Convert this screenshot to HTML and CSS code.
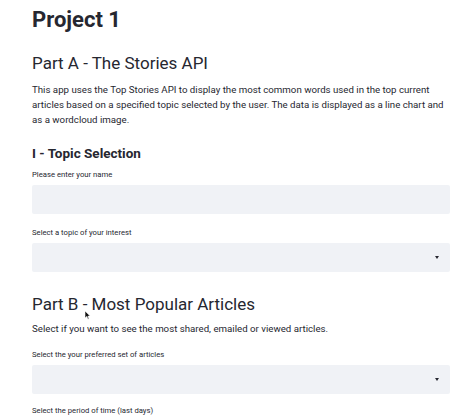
FILE: index.html
```html
<!DOCTYPE html>
<html lang="en">
<head>
<meta charset="utf-8">
<title>Project 1</title>
<link rel="stylesheet" href="styles.css">
</head>
<body>
<main class="app">
  <h1 class="title">Project 1</h1>
  <h2 class="heading heading-a">Part A - The Stories API</h2>
  <p class="text">This app uses the Top Stories API to display the most common words used in the top current articles based on a specified topic selected by the user. The data is displayed as a line chart and as a wordcloud image.</p>
  <h3 class="section">I - Topic Selection</h3>
  <div class="field field-first">
    <label class="label">Please enter your name</label>
    <div class="box"></div>
  </div>
  <div class="field">
    <label class="label">Select a topic of your interest</label>
    <div class="box select"><span class="caret"></span></div>
  </div>
  <h2 class="heading heading-b">Part B - Most Popular Articles</h2>
  <p class="text text-b">Select if you want to see the most shared, emailed or viewed articles.</p>
  <div class="field">
    <label class="label">Select the your preferred set of articles</label>
    <div class="box select"><span class="caret"></span></div>
  </div>
  <div class="field field-last">
    <label class="label">Select the period of time (last days)</label>
  </div>
  <svg class="cursor" width="6" height="9" viewBox="0 0 6 9"><path d="M0 0 L0 7 L1.8 5.4 L3 8.2 L4 7.8 L2.9 5.1 L5.2 5.1 Z" fill="#111" stroke="#fff" stroke-width="0.6"/></svg>
</main>
</body>
</html>
```
FILE: styles.css
```css
html, body {
  margin: 0;
  padding: 0;
  background: #ffffff;
}
body {
  font-family: Roboto, "Noto Sans", sans-serif;
  color: #262730;
}
.app {
  position: relative;
  width: 418px;
  padding: 6px 0 0 32px;
}
.title {
  margin: 0;
  font-size: 22px;
  font-weight: 700;
  line-height: 28px;
}
.heading {
  margin: 0;
  font-size: 17px;
  font-weight: 400;
  line-height: 22px;
}
.heading-a {
  margin-top: 18px;
}
.heading-b {
  margin-top: 21px;
}
.text {
  margin: 8px 0 0;
  font-size: 9.7px;
  line-height: 15.2px;
}
.text-b {
  margin-top: 6px;
}
.section {
  margin: 16px 0 0;
  font-size: 13.5px;
  font-weight: 700;
  line-height: 18px;
}
.field {
  margin-top: 13px;
  display: flex;
  flex-direction: column;
}
.field-first {
  margin-top: 7px;
}
.field-last {
  margin-top: 11px;
}
.label {
  font-size: 7.7px;
  line-height: 12px;
  margin-bottom: 4px;
}
.box {
  height: 29px;
  background: #f0f2f6;
  border-radius: 2px;
  display: flex;
  align-items: center;
  justify-content: flex-end;
}
.caret {
  width: 0;
  height: 0;
  margin-right: 11px;
  border-left: 2.5px solid transparent;
  border-right: 2.5px solid transparent;
  border-top: 3px solid #262730;
}
.cursor {
  position: absolute;
  left: 85px;
  top: 311px;
}
```
